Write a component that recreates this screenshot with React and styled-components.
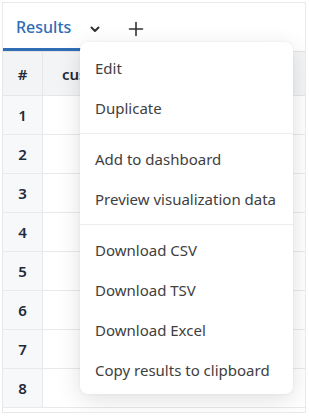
import React from 'react';
import styled, { createGlobalStyle } from 'styled-components';

const GlobalStyle = createGlobalStyle`
  html, body {
    margin: 0;
    padding: 0;
    background: #fff;
    font-family: "Noto Sans", "Open Sans", Arial, sans-serif;
  }
  * { box-sizing: border-box; }
`;

const Frame = styled.div`
  width: 309px;
  height: 417px;
  padding: 2px 3px 4px 2px;
`;

const Panel = styled.div`
  position: relative;
  height: 100%;
  border: 1px solid #e9e9e9;
  background: #fff;
  overflow: hidden;
`;

const TabBar = styled.div`
  display: flex;
  align-items: stretch;
  height: 49px;
  border-bottom: 1px solid #e3e3e3;
`;

const Tab = styled.div`
  display: flex;
  align-items: center;
  padding: 3px 13px 0 13px;
  font-size: 16px;
  font-weight: 500;
  color: #2f6db5;
  border-bottom: 3px solid #2f6db5;
`;

const IconButton = styled.button`
  display: flex;
  align-items: center;
  justify-content: center;
  width: 22px;
  margin-left: ${(p) => p.$gap || 0}px;
  border: none;
  background: none;
  padding: 3px 0 0 0;
  color: #333;
`;

const Table = styled.div`
  display: grid;
  grid-template-columns: 40px 1fr;
`;

const HeadCell = styled.div`
  height: 44px;
  display: flex;
  align-items: center;
  justify-content: ${(p) => (p.$num ? 'center' : 'flex-start')};
  padding-left: ${(p) => (p.$num ? 0 : 19)}px;
  background: #f3f4f6;
  border-bottom: 1px solid #e6e7e9;
  border-right: ${(p) => (p.$num ? '1px solid #e6e7e9' : 'none')};
  font-size: 15px;
  font-weight: 600;
  color: #1f2a3a;
  white-space: nowrap;
`;

const Cell = styled.div`
  height: 39px;
  display: flex;
  align-items: center;
  justify-content: center;
  background: ${(p) => (p.$num ? '#f7f8fa' : '#fff')};
  border-bottom: 1px solid #e9eaec;
  border-right: ${(p) => (p.$num ? '1px solid #e6e7e9' : 'none')};
  font-size: 15px;
  font-weight: 600;
  color: #1f2a3a;
`;

const Menu = styled.div`
  position: absolute;
  left: 77px;
  top: 39px;
  width: 213px;
  padding: 6px 0 4px;
  background: #fff;
  border-radius: 8px;
  box-shadow: 0 6px 24px rgba(0, 0, 0, 0.12), 0 0 3px rgba(0, 0, 0, 0.06);
`;

const MenuItem = styled.div`
  height: 40px;
  display: flex;
  align-items: center;
  padding-left: 15px;
  font-size: 15px;
  color: #404040;
  white-space: nowrap;
`;

const Divider = styled.div`
  height: 1px;
  margin: 5px 0;
  background: #ececec;
`;

const menuGroups = [
  ['Edit', 'Duplicate'],
  ['Add to dashboard', 'Preview visualization data'],
  ['Download CSV', 'Download TSV', 'Download Excel', 'Copy results to clipboard'],
];

export default function App() {
  const rows = [1, 2, 3, 4, 5, 6, 7, 8];
  return (
    <>
      <GlobalStyle />
      <Frame>
        <Panel>
          <TabBar>
            <Tab>Results</Tab>
            <IconButton>
              <svg width="12" height="12" viewBox="0 0 12 12" fill="none">
                <path d="M2.5 4.5 L6 8 L9.5 4.5" stroke="#333" strokeWidth="2" strokeLinecap="round" strokeLinejoin="round" />
              </svg>
            </IconButton>
            <IconButton $gap={19}>
              <svg width="16" height="16" viewBox="0 0 16 16" fill="none">
                <path d="M8 1.5 V14.5 M1.5 8 H14.5" stroke="#333" strokeWidth="1.6" strokeLinecap="round" />
              </svg>
            </IconButton>
          </TabBar>
          <Table>
            <HeadCell $num>#</HeadCell>
            <HeadCell>customer_id</HeadCell>
            {rows.map((n) => (
              <React.Fragment key={n}>
                <Cell $num>{n}</Cell>
                <Cell />
              </React.Fragment>
            ))}
          </Table>
          <Menu>
            {menuGroups.map((group, gi) => (
              <React.Fragment key={gi}>
                {gi > 0 && <Divider />}
                {group.map((label) => (
                  <MenuItem key={label}>{label}</MenuItem>
                ))}
              </React.Fragment>
            ))}
          </Menu>
        </Panel>
      </Frame>
    </>
  );
}
